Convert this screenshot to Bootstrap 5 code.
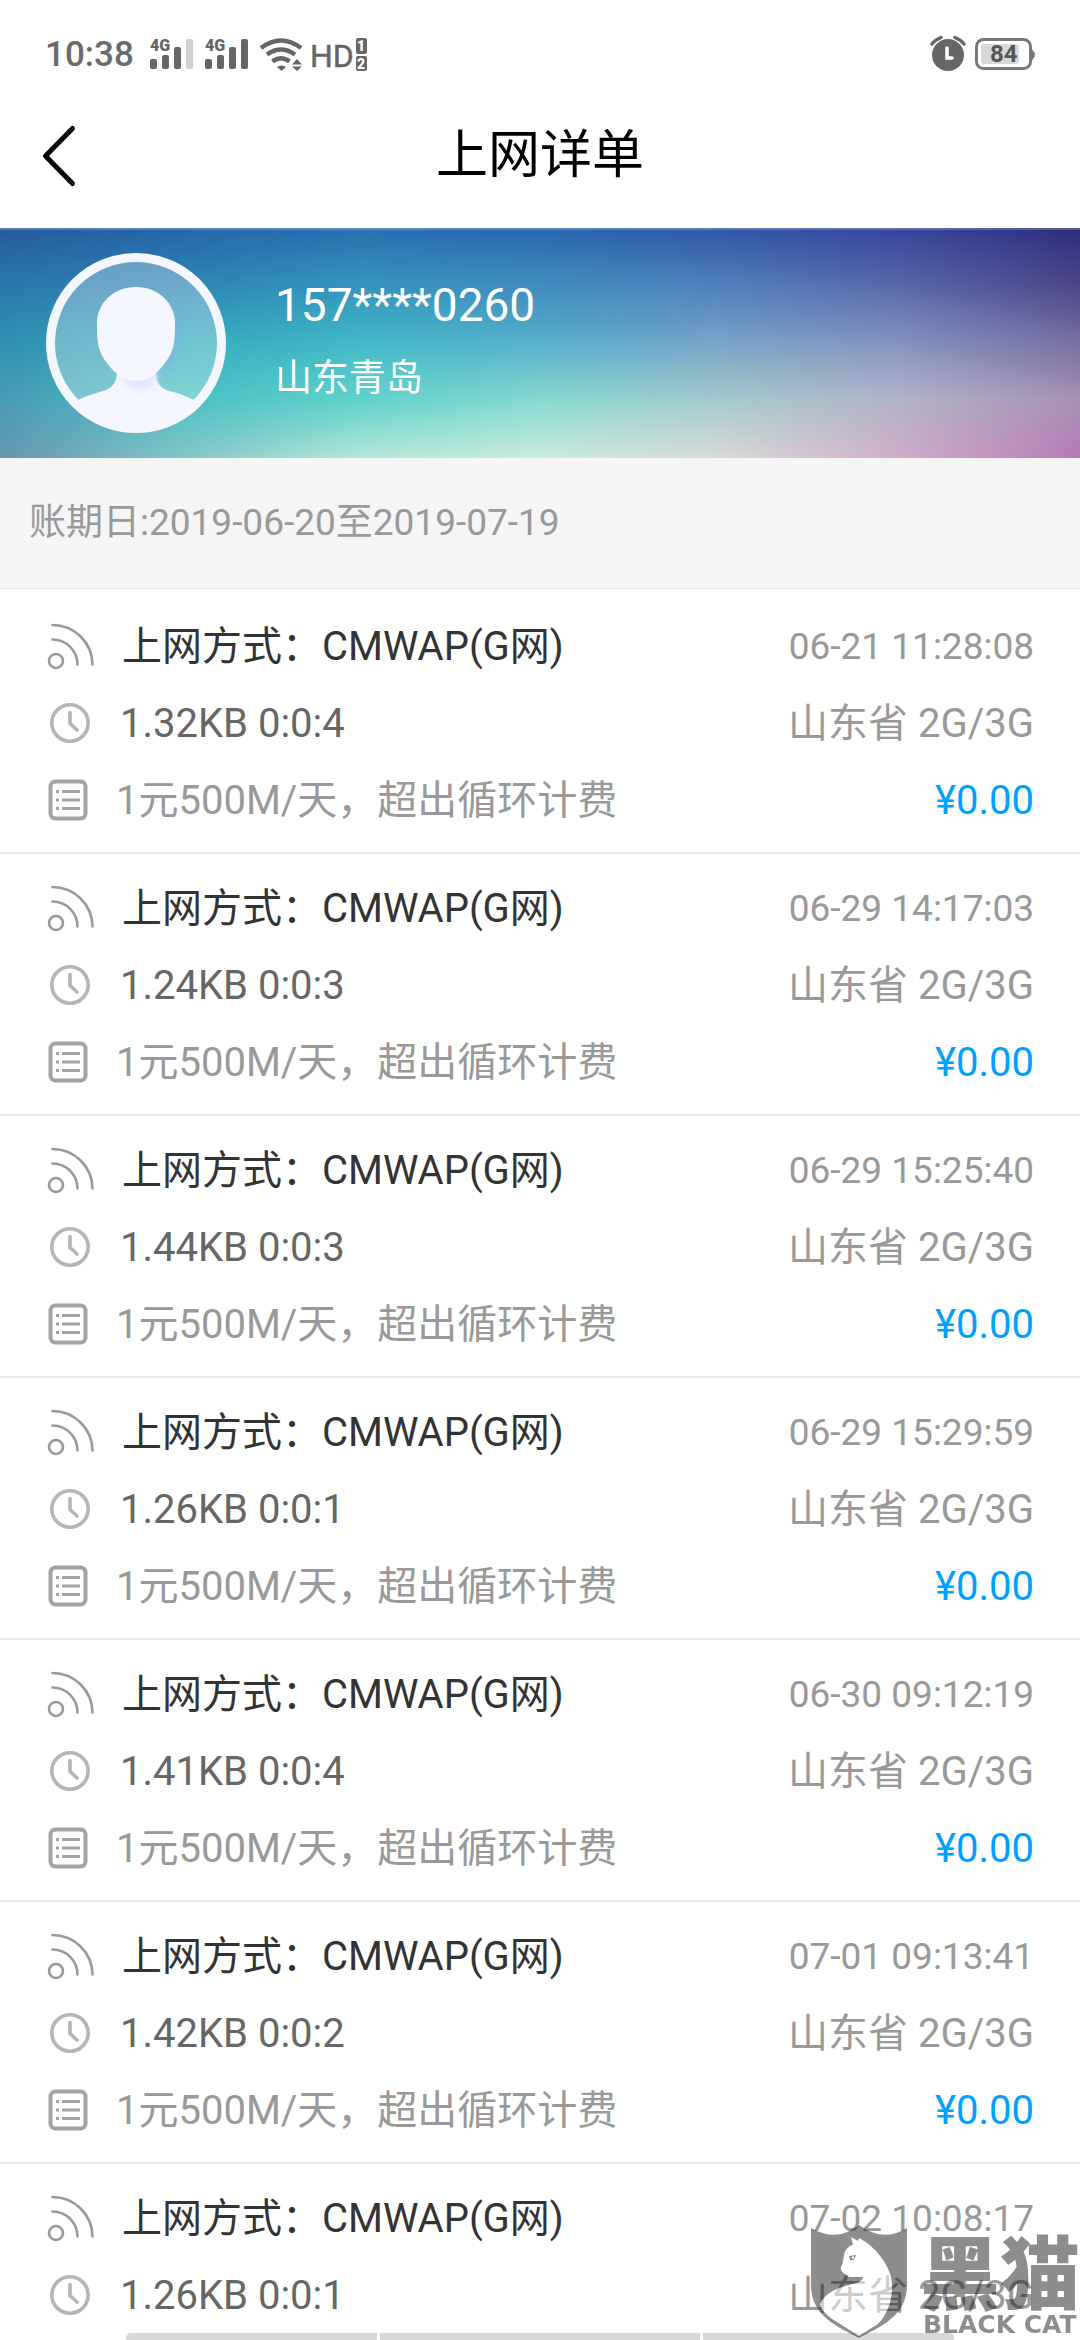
<!DOCTYPE html>
<html lang="zh-CN">
<head>
<meta charset="utf-8">
<meta name="viewport" content="width=device-width, initial-scale=1">
<title>上网详单</title>
<link href="https://cdn.jsdelivr.net/npm/bootstrap@5.3.0/dist/css/bootstrap.min.css" rel="stylesheet">
<style>
  body { font-family: Roboto, "Noto Sans CJK SC", sans-serif; color: #333; background: #fff; }
  svg { display: block; flex: none; }
  .screen { overflow: hidden; }

  .status-bar { height: 84px; padding: 24px 44px 0 45px; color: #6a6a6a; }
  .status-time { padding-top: 2px; font-size: 35px; font-weight: 500; line-height: 40px; }
  .sys-icon text { font-family: Roboto, sans-serif; font-weight: 900; }
  .sys-icon .sys-hd { font-size: 32px; font-weight: 400; }
  .sys-icon .sys-level { font-size: 24px; font-weight: 700; }

  .title-bar { height: 144px; padding: 0 36px; color: #000; }
  .title-bar h1 { font-size: 52px; font-weight: 400; line-height: 64px; }
  .back-btn { width: 48px; height: 72px; color: #000; }

  .account { height: 230px; padding: 0 46px; gap: 49px; color: #fff; }
  .account-bg { z-index: 0; }
  .account-info, .avatar { z-index: 1; }
  .account-phone { font-size: 46px; line-height: 72px; }
  .account-city { font-size: 37px; line-height: 76px; }

  .period { padding: 0 29px; font-size: 37px; line-height: 130px; color: #999; background: #f5f5f5; border-bottom: 1px solid #e5e5e5; }

  .records { padding-top: 3px; }
  .record { padding: 16px 46px 13px 46px; border-bottom: 2px solid #ebebeb; font-size: 40px; line-height: 77px; }
  .record-way { gap: 28px; color: #333; }
  .record-use { gap: 26px; color: #666; }
  .record-plan { gap: 22px; color: #999; }
  .record-side { color: #999; }
  .record-date { font-size: 37px; }
  .record-price { color: #00a0ff; }

  .bottom-hint { height: 7px; padding: 0 126px; gap: 3px; }
  .bottom-hint span { background: #d8d8d8; flex: 25 1 0; }
  .bottom-hint span:first-child { border-top-left-radius: 5px; }
  .bottom-hint span:nth-child(2) { flex-grow: 32; }
  .bottom-hint span:last-child { border-top-right-radius: 5px; }

  .stamp { gap: 12px; opacity: .5; color: #1f1c1d; }
  .stamp-name { font-family: "Noto Sans CJK SC", sans-serif; font-size: 80px; font-weight: 900; line-height: 84px; }
  .stamp-latin { padding-left: 3px; font-family: "DejaVu Sans", sans-serif; font-size: 25px; font-weight: 700; line-height: 30px; }
</style>
</head>
<body>
<svg width="0" height="0" class="position-absolute" aria-hidden="true">
  <symbol id="i-rss" viewBox="0 1 48 48">
    <g fill="none" stroke="#999" stroke-width="2.6" stroke-linecap="round">
      <circle cx="10" cy="39" r="7"/>
      <path d="M6.500 17.500A25 25 0 0 1 31.500 42.500M6.500 3A40 40 0 0 1 46.500 42.500"/>
    </g>
  </symbol>
  <symbol id="i-clock" viewBox="0 1 48 48">
    <g fill="none" stroke="#b5b5b5" stroke-width="3.600" stroke-linecap="round" stroke-linejoin="round">
      <circle cx="24" cy="24" r="18.200"/><path d="M24 13.500V24.500L31 31"/>
    </g>
  </symbol>
  <symbol id="i-list" viewBox="0 1 48 48">
    <g fill="none" stroke="#a3a3a3">
      <rect x="4.500" y="5.500" width="35" height="37" rx="5" stroke-width="4"/>
      <path d="M16 15.500H34M16 24H34M16 32.500H34M10 15.500H13M10 24H13M10 32.500H13" stroke-width="3"/>
    </g>
  </symbol>
</svg>

<div class="screen vh-100 d-flex flex-column position-relative">
  <header class="flex-shrink-0">
    <div class="status-bar d-flex align-items-center justify-content-between">
      <div class="d-flex align-items-center">
        <span class="status-time">10:38</span>
        <svg class="sys-icon ms-3" width="220" height="48" viewBox="149 30 220 48" fill="#666" role="img" aria-label="信号">
          <text x="149" y="51" font-size="16">4G</text>
          <rect x="149" y="59" width="7" height="10" rx="2"/><rect x="161" y="55" width="7" height="14" rx="2"/>
          <rect x="173" y="47" width="7" height="22" rx="2"/><rect x="185" y="39" width="7" height="30" rx="2" fill="#d0d0d0"/>
          <text x="204" y="51" font-size="16">4G</text>
          <rect x="204" y="59" width="7" height="10" rx="2"/><rect x="216" y="55" width="7" height="14" rx="2"/>
          <rect x="228" y="47" width="7" height="22" rx="2"/><rect x="240" y="39" width="7" height="30" rx="2"/>
          <g fill="none" stroke="#666" stroke-width="4.500">
            <path d="M260 48Q280 33 300 48M266 54.500Q280 44.500 294 54.500M271.500 61.500Q280 55 288.500 61.500"/>
          </g>
          <path d="M276 67Q280.500 64 285 67L280.500 71ZM291 64.500L296 59L301 64.500ZM291 66.500H301L296 71Z"/>
          <text class="sys-hd" x="309" y="67" stroke="#666" stroke-width=".5">HD</text>
          <rect x="355" y="38" width="11" height="16" rx="2"/><rect x="355" y="56" width="11" height="15" rx="2"/>
          <g fill="#fff" font-size="14"><text x="356" y="51">1</text><text x="356" y="69">2</text></g>
        </svg>
      </div>
      <svg class="sys-icon" width="107" height="38" viewBox="929 35 107 38" fill="#666" role="img" aria-label="闹钟，电量 84">
        <circle cx="948" cy="55" r="16"/>
        <path d="M932 44Q935 40 941 37.500M964 44Q961 40 955 37.500" fill="none" stroke="#666" stroke-width="3.500" stroke-linecap="round"/>
        <path d="M947 48V58H952" fill="none" stroke="#fff" stroke-width="3.500" stroke-linecap="round"/>
        <rect x="976.500" y="39.500" width="54" height="29" rx="7" fill="none" stroke="#777" stroke-width="3"/>
        <path d="M1032 51Q1036 54 1032 59Z" stroke="#777" stroke-width="2"/>
        <rect x="981" y="44" width="38" height="20" rx="3" fill="#d8d8d8"/>
        <text class="sys-level" x="990" y="62" fill="#555">84</text>
      </svg>
    </div>
    <div class="title-bar d-flex align-items-center justify-content-between">
      <button type="button" class="back-btn btn border-0 p-0" aria-label="返回">
        <svg width="48" height="72" viewBox="0 0 48 72" fill="none" stroke="currentColor" stroke-width="5" stroke-linecap="round" stroke-linejoin="round"><path d="M36.500 8.500L9.500 36L36.500 63.500"/></svg>
      </button>
      <h1 class="m-0">上网详单</h1>
      <span class="back-btn"></span>
    </div>
  </header>

  <section class="account flex-shrink-0 position-relative d-flex align-items-center">
    <svg class="account-bg position-absolute top-0 start-0 w-100 h-100" viewBox="0 0 1080 230" preserveAspectRatio="none" aria-hidden="true">
      <defs>
        <linearGradient id="r0"><stop offset="0" stop-color="#275a9c"/><stop offset=".167" stop-color="#2766a8"/><stop offset=".333" stop-color="#2a70b0"/><stop offset=".5" stop-color="#2a68ac"/><stop offset=".667" stop-color="#3058a4"/><stop offset=".833" stop-color="#37459a"/><stop offset="1" stop-color="#2e2e7c"/></linearGradient>
        <linearGradient id="r1"><stop offset="0" stop-color="#2a78ac"/><stop offset=".167" stop-color="#2d86b4"/><stop offset=".333" stop-color="#3594bc"/><stop offset=".5" stop-color="#408cbe"/><stop offset=".667" stop-color="#5080bc"/><stop offset=".833" stop-color="#5868a8"/><stop offset="1" stop-color="#4c4688"/></linearGradient>
        <linearGradient id="r2"><stop offset="0" stop-color="#3090b0"/><stop offset=".167" stop-color="#34acbe"/><stop offset=".333" stop-color="#42bac6"/><stop offset=".5" stop-color="#58b0ca"/><stop offset=".667" stop-color="#78a4c8"/><stop offset=".833" stop-color="#8494c0"/><stop offset="1" stop-color="#7870a2"/></linearGradient>
        <linearGradient id="r3"><stop offset="0" stop-color="#4a9cb4"/><stop offset=".167" stop-color="#4cc0c4"/><stop offset=".333" stop-color="#60d2cc"/><stop offset=".5" stop-color="#88d8d2"/><stop offset=".667" stop-color="#a4cace"/><stop offset=".833" stop-color="#b4b4c8"/><stop offset="1" stop-color="#a890b4"/></linearGradient>
        <linearGradient id="r4"><stop offset="0" stop-color="#6896b0"/><stop offset=".167" stop-color="#84c4c8"/><stop offset=".333" stop-color="#b4e6d8"/><stop offset=".5" stop-color="#c8ecdc"/><stop offset=".667" stop-color="#d8dad6"/><stop offset=".833" stop-color="#d0acca"/><stop offset="1" stop-color="#b67ab6"/></linearGradient>
        <linearGradient id="f1" gradientUnits="userSpaceOnUse" x1="0" x2="0" y1="0" y2="57"><stop offset="0" stop-color="#000"/><stop offset="1" stop-color="#fff"/></linearGradient>
        <linearGradient id="f2" href="#f1" y1="57" y2="115" gradientUnits="userSpaceOnUse" x1="0" x2="0"/>
        <linearGradient id="f3" href="#f1" y1="115" y2="172" gradientUnits="userSpaceOnUse" x1="0" x2="0"/>
        <linearGradient id="f4" href="#f1" y1="172" y2="230" gradientUnits="userSpaceOnUse" x1="0" x2="0"/>
        <mask id="m1" maskUnits="userSpaceOnUse" x="0" y="0" width="1080" height="230"><rect width="1080" height="230" fill="url(#f1)"/></mask>
        <mask id="m2" maskUnits="userSpaceOnUse" x="0" y="0" width="1080" height="230"><rect width="1080" height="230" fill="url(#f2)"/></mask>
        <mask id="m3" maskUnits="userSpaceOnUse" x="0" y="0" width="1080" height="230"><rect width="1080" height="230" fill="url(#f3)"/></mask>
        <mask id="m4" maskUnits="userSpaceOnUse" x="0" y="0" width="1080" height="230"><rect width="1080" height="230" fill="url(#f4)"/></mask>
      </defs>
      <rect width="1080" height="230" fill="url(#r0)"/>
      <rect width="1080" height="230" fill="url(#r1)" mask="url(#m1)"/>
      <rect width="1080" height="230" fill="url(#r2)" mask="url(#m2)"/>
      <rect width="1080" height="230" fill="url(#r3)" mask="url(#m3)"/>
      <rect width="1080" height="230" fill="url(#r4)" mask="url(#m4)"/>
      <rect width="1080" height="2" fill="#fff" opacity=".2"/>
    </svg>
    <svg class="avatar position-relative" width="180" height="180" viewBox="0 0 180 180" role="img" aria-label="头像">
      <defs>
        <filter id="soft" x="-30%" y="-30%" width="160%" height="160%"><feGaussianBlur stdDeviation="4"/></filter>
        <clipPath id="disc"><circle cx="90" cy="90" r="86"/></clipPath>
      </defs>
      <circle cx="90" cy="90" r="86" fill="#fff" fill-opacity=".3"/>
      <g clip-path="url(#disc)">
        <path d="M94 40C118 40 133 54 133 76C133 105 122 116 108 130Z" fill="#7fb0e8" opacity=".55" filter="url(#soft)"/>
        <path d="M71 118C71 130 66 135 57 138C46 141 38 144 30 148V180H150V148C142 144 133 140 123 138C114 135 110 130 110 118Z" fill="#f4f7ff"/>
        <ellipse cx="94" cy="124" rx="17" ry="12" fill="#dfe5fd" filter="url(#soft)"/>
      </g>
      <path d="M90 34C112 34 129 50 129 70C129 90 128 98 119 110C109 124 99 128 90 128C81 128 71 124 61 110C52 98 51 90 51 70C51 50 68 34 90 34Z" fill="#f4f7ff"/>
      <circle cx="90" cy="90" r="85.500" fill="none" stroke="#f4f7ff" stroke-width="9"/>
    </svg>
    <div class="account-info position-relative">
      <div class="account-phone">157****0260</div>
      <div class="account-city">山东青岛</div>
    </div>
  </section>

  <div class="period flex-shrink-0">账期日:2019-06-20至2019-07-19</div>

  <main>
    <ul class="records list-unstyled mb-0" id="records"></ul>
  </main>

  <div class="bottom-hint position-absolute bottom-0 start-0 w-100 d-flex" aria-hidden="true"><span></span><span></span><span></span></div>

  <div class="stamp position-absolute bottom-0 end-0 d-flex align-items-end">
    <svg width="97" height="115" viewBox="0 0 97 115" aria-hidden="true">
      <path d="M0 3Q26 18 48 0Q72 18 96 3V60C96 92 68 102 48 113C28 102 0 92 0 60Z" fill="#1f1c1d"/>
      <path d="M40 12L47 16L48 13C62 20 76 36 80 52C84 72 76 90 67 99L48 111L26 97C14 90 10 84 9 79C14 68 26 63 38 60C46 58 51 57 52 52H38L36 50C31 48 29 45 30 42C33 38 32 28 35 25C38 21 40 20 42 20Z" fill="#fff"/>
      <path d="M38 31L45 30L43 35L39 35Z" fill="#1f1c1d"/>
      <circle cx="42" cy="32.500" r="1.200" fill="#fff"/>
    </svg>
    <div>
      <div class="stamp-name">黑猫</div>
      <div class="stamp-latin">BLACK CAT</div>
    </div>
  </div>
</div>

<script src="https://cdn.jsdelivr.net/npm/bootstrap@5.3.0/dist/js/bootstrap.bundle.min.js"></script>
<script>
  const rows = [
    ["06-21 11:28:08", "1.32KB 0:0:4"],
    ["06-29 14:17:03", "1.24KB 0:0:3"],
    ["06-29 15:25:40", "1.44KB 0:0:3"],
    ["06-29 15:29:59", "1.26KB 0:0:1"],
    ["06-30 09:12:19", "1.41KB 0:0:4"],
    ["07-01 09:13:41", "1.42KB 0:0:2"],
    ["07-02 10:08:17", "1.26KB 0:0:1"]
  ];
  const icon = id => `<svg width="48" height="48" aria-hidden="true"><use href="#${id}"/></svg>`;
  document.getElementById("records").innerHTML = rows.map(([date, use], i) => `
    <li class="record">
      <div class="d-flex justify-content-between">
        <div class="record-way d-flex align-items-center">${icon("i-rss")}<span>上网方式：CMWAP(G网)</span></div>
        <span class="record-side record-date">${date}</span>
      </div>
      <div class="d-flex justify-content-between">
        <div class="record-use d-flex align-items-center">${icon("i-clock")}<span>${use}</span></div>
        <span class="record-side">山东省 2G/3G</span>
      </div>
      ${i < rows.length - 1 ? `<div class="d-flex justify-content-between">
        <div class="record-plan d-flex align-items-center">${icon("i-list")}<span>1元500M/天，超出循环计费</span></div>
        <span class="record-price">¥0.00</span>
      </div>` : ""}
    </li>`).join("");
</script>
</body>
</html>
